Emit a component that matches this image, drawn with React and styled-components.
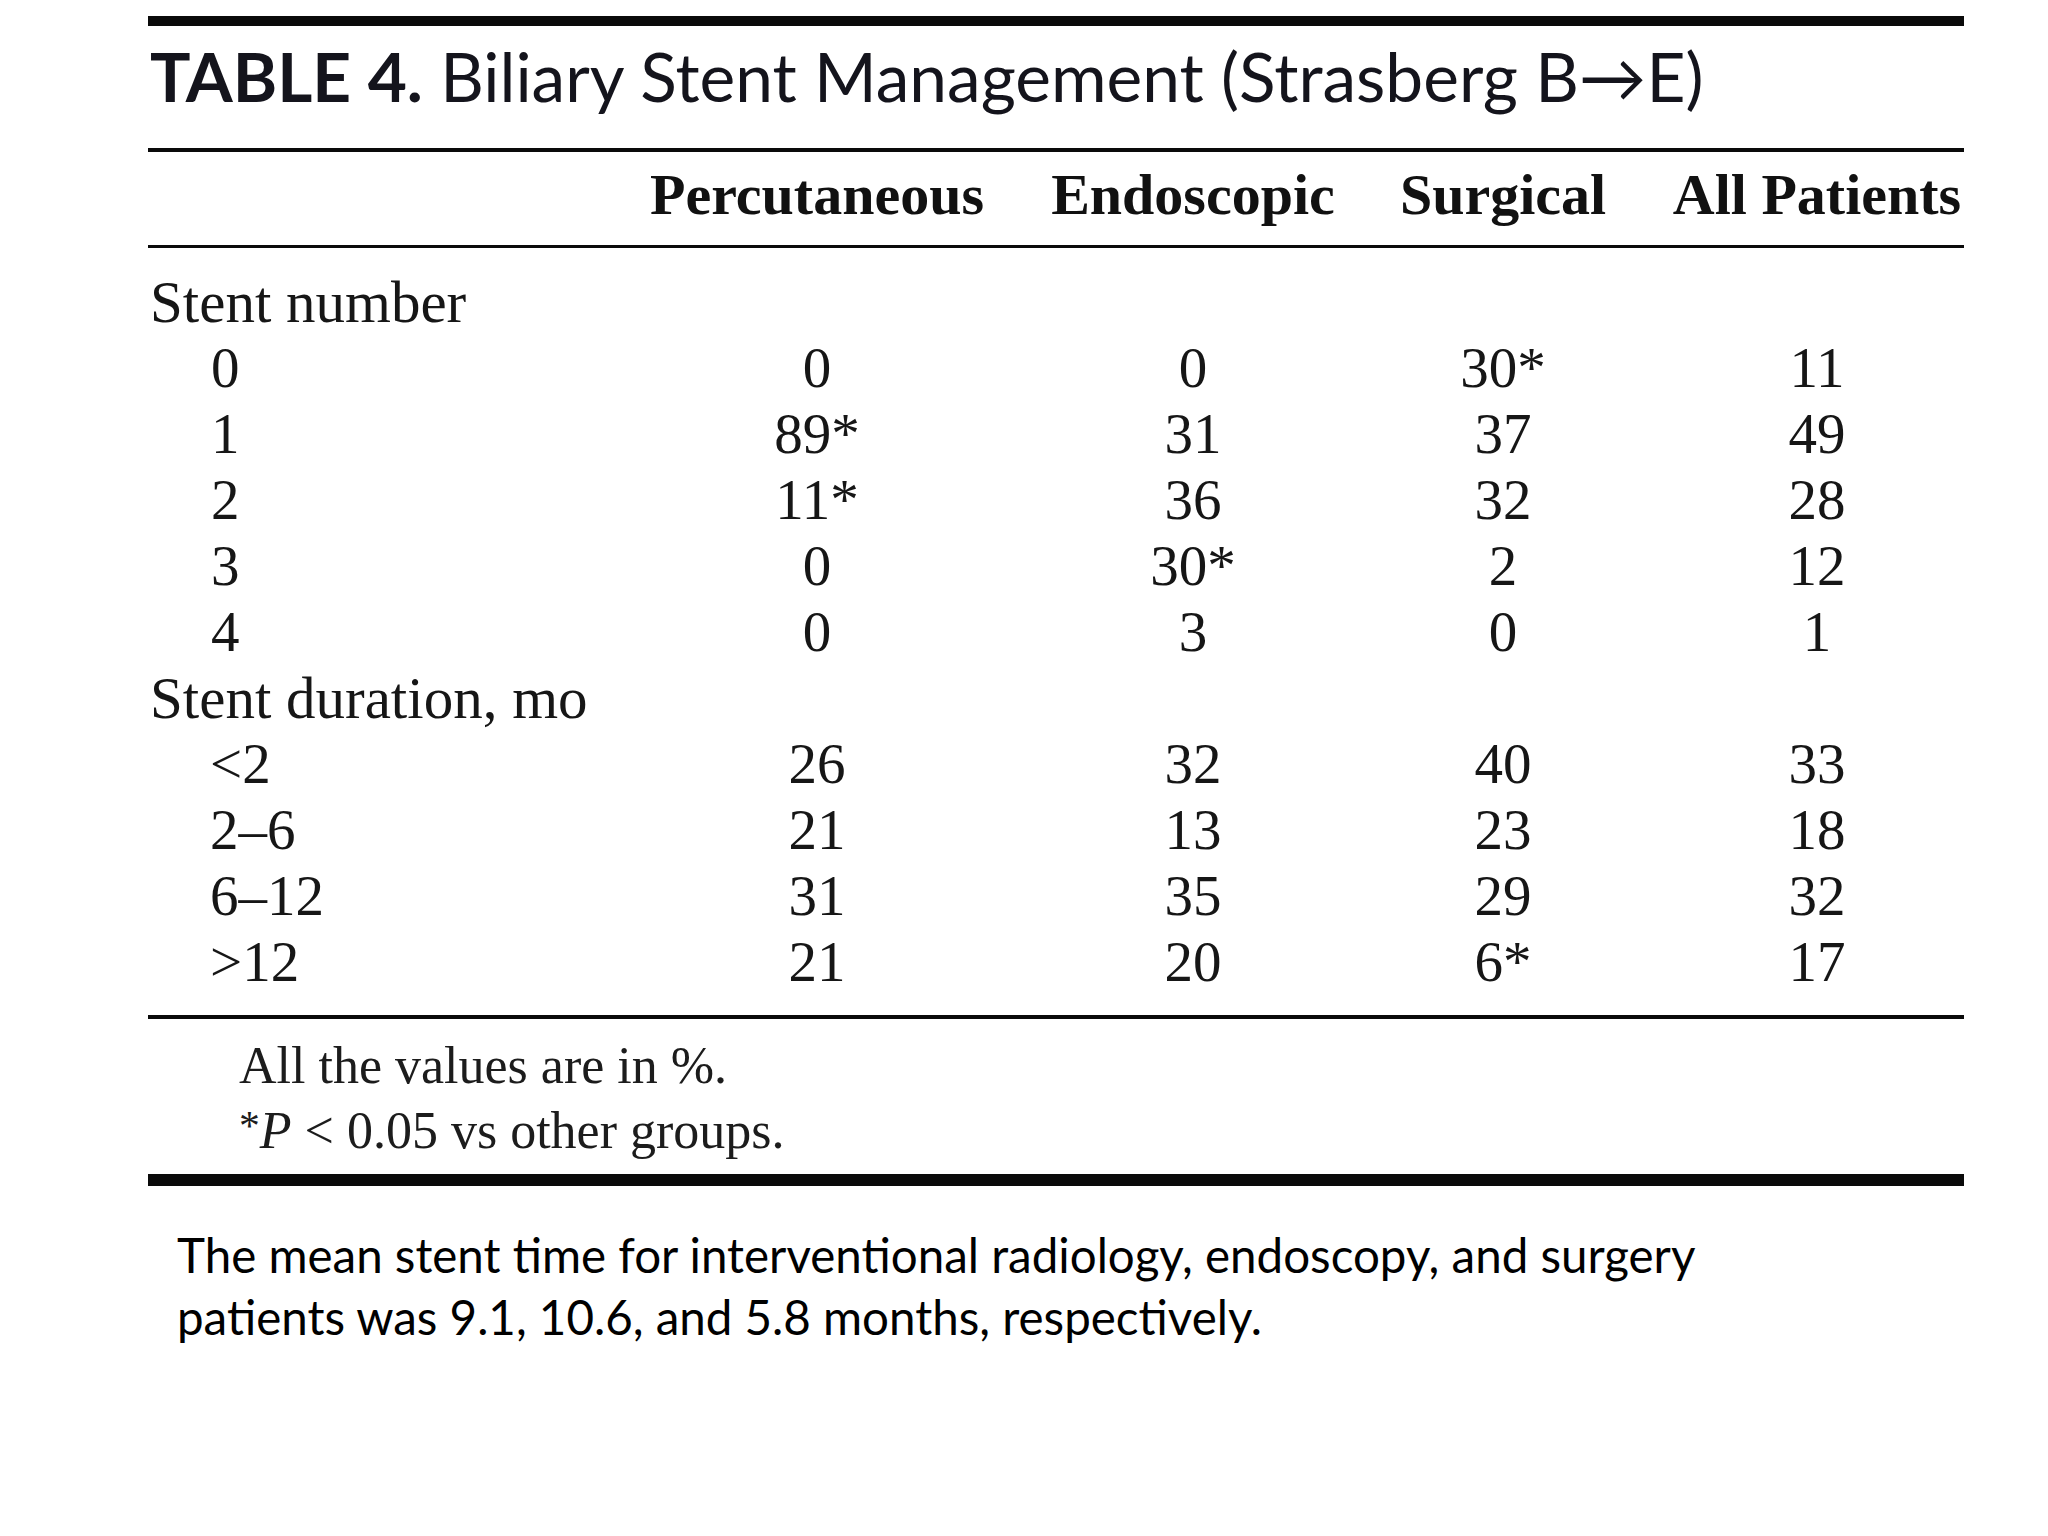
import React from 'react';
import styled, { createGlobalStyle } from 'styled-components';

const GlobalStyle = createGlobalStyle`
  html, body {
    margin: 0;
    padding: 0;
    background: #ffffff;
  }
  body {
    width: 2048px;
    min-height: 1536px;
    color: #111111;
  }
`;

const COLUMNS = '436px 466px 286px 334px 294px';

const Page = styled.div`
  width: 1816px;
  padding: 16px 0 0 148px;
`;

const Rule = styled.div`
  height: ${(p) => p.$weight || 3}px;
  background: #0a0a0a;
  margin-top: ${(p) => p.$gap || 0}px;
`;

const Title = styled.h1`
  margin: 0;
  padding: 16px 0 0 2px;
  height: 67px;
  font-family: Lato, 'Open Sans', sans-serif;
  font-weight: 400;
  font-size: 67.6px;
  line-height: 67px;
  color: #14141c;
  white-space: nowrap;
`;

const TitleLead = styled.span`
  font-weight: 700;
`;

const HeaderRow = styled.div`
  display: grid;
  grid-template-columns: ${COLUMNS};
  height: 85px;
  padding-bottom: 8px;
  font-family: 'Liberation Serif', 'Times New Roman', serif;
  font-weight: 700;
  font-size: 58px;
  line-height: 85px;
`;

const HeadCell = styled.div`
  text-align: center;
  white-space: nowrap;
`;

const Body = styled.div`
  padding: 21px 0 20px;
  font-family: 'Liberation Serif', 'Times New Roman', serif;
  font-size: 57px;
  line-height: 66px;
  color: #161616;
`;

const Row = styled.div`
  display: grid;
  grid-template-columns: ${COLUMNS};
  height: 66px;
`;

const GroupLabel = styled.div`
  grid-column: 1 / -1;
  padding-left: 2px;
  font-size: 59px;
  white-space: nowrap;
`;

const Stub = styled.div`
  padding-left: ${(p) => (p.$wide ? 62 : 63)}px;
  white-space: nowrap;
`;

const Cell = styled.div`
  text-align: center;
  white-space: nowrap;
`;

const Notes = styled.div`
  padding: 16px 0 13px 91px;
  font-family: 'Liberation Serif', 'Times New Roman', serif;
  font-size: 52px;
  line-height: 61px;
  color: #1c1c1c;
`;

const Note = styled.div`
  white-space: nowrap;
`;

const Mark = styled.span`
  font-size: 0.8em;
  vertical-align: 0.2em;
`;

const Italic = styled.i`
  font-style: italic;
`;

const Caption = styled.p`
  margin: 38px 0 0 29px;
  width: 1580px;
  font-family: Lato, 'Open Sans', sans-serif;
  font-size: 47.5px;
  line-height: 62px;
  color: #000000;
`;

const rows = [
  { group: 'Stent number' },
  { label: '0', values: ['0', '0', '30*', '11'] },
  { label: '1', values: ['89*', '31', '37', '49'] },
  { label: '2', values: ['11*', '36', '32', '28'] },
  { label: '3', values: ['0', '30*', '2', '12'] },
  { label: '4', values: ['0', '3', '0', '1'] },
  { group: 'Stent duration, mo' },
  { label: '<2', values: ['26', '32', '40', '33'] },
  { label: '2–6', values: ['21', '13', '23', '18'] },
  { label: '6–12', values: ['31', '35', '29', '32'] },
  { label: '>12', values: ['21', '20', '6*', '17'] },
];

const headers = ['Percutaneous', 'Endoscopic', 'Surgical', 'All Patients'];

const App = () => {
  return (
    <>
      <GlobalStyle />
      <Page>
        <Rule $weight={10} />
        <Title>
          <TitleLead>TABLE 4.</TitleLead> Biliary Stent Management (Strasberg B→E)
        </Title>
        <Rule $weight={4} $gap={39} />
        <HeaderRow>
          <div />
          {headers.map((h) => (
            <HeadCell key={h}>{h}</HeadCell>
          ))}
        </HeaderRow>
        <Rule $weight={3} />
        <Body>
          {rows.map((row, i) =>
            row.group ? (
              <Row key={i}>
                <GroupLabel>{row.group}</GroupLabel>
              </Row>
            ) : (
              <Row key={i}>
                <Stub $wide={row.label.length > 1}>{row.label}</Stub>
                {row.values.map((v, j) => (
                  <Cell key={j}>{v}</Cell>
                ))}
              </Row>
            )
          )}
        </Body>
        <Rule $weight={4} />
        <Notes>
          <Note>All the values are in %.</Note>
          <Note>
            <Mark>*</Mark>
            <Italic>P</Italic> &lt; 0.05 vs other groups.
          </Note>
        </Notes>
        <Rule $weight={12} />
        <Caption>
          The mean stent time for interventional radiology, endoscopy, and surgery
          patients was 9.1, 10.6, and 5.8 months, respectively.
        </Caption>
      </Page>
    </>
  );
};

export default App;
